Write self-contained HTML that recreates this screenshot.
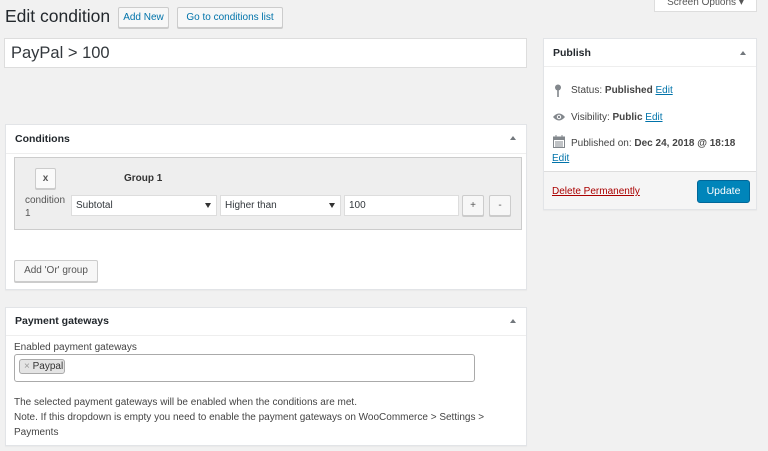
<!DOCTYPE html>
<html><head><meta charset="utf-8"><style>
*{box-sizing:border-box;margin:0;padding:0}
body{width:768px;height:451px;background:#f1f1f1;font-family:"Liberation Sans",sans-serif;font-size:10px;color:#444;position:relative;overflow:hidden}
.a{position:absolute}
.box{position:absolute;background:#fff;border:1px solid #e2e4e7;box-shadow:0 1px 1px rgba(0,0,0,.04)}
.btn{position:absolute;background:#f7f7f7;border:1px solid #ccc;border-radius:2px;box-shadow:0 1px 0 #ccc;color:#555;font-size:10px;text-align:center}
.hd{position:absolute;left:0;right:0;top:0;border-bottom:1px solid #eee;font-weight:bold;color:#23282d;font-size:10.5px;padding-left:9px}
.tri{position:absolute;right:10px;width:0;height:0;border-left:3px solid transparent;border-right:3px solid transparent;border-bottom:4px solid #72777c}
.sel{position:absolute;background:#fff;border:1px solid #ddd;height:21px;line-height:19px;padding-left:4px;color:#32373c;font-size:10px}
.sel i{position:absolute;right:5px;top:7px;border-left:3px solid transparent;border-right:3px solid transparent;border-top:5px solid #333}
a{color:#0073aa;text-decoration:underline}
</style></head><body>
<div class="a" style="left:654px;top:-2px;width:103px;height:14px;background:#fff;border:1px solid #ddd;border-top:none;font-size:10px;color:#555;text-align:center;line-height:10px">Screen Options ▾</div>
<div class="a" style="left:5px;top:6px;font-size:17.5px;color:#23282d">Edit condition</div>
<div class="btn" style="left:118px;top:7px;width:51px;height:21px;line-height:19px;color:#0073aa">Add New</div>
<div class="btn" style="left:177px;top:7px;width:106px;height:21px;line-height:19px;color:#0073aa">Go to conditions list</div>
<div class="a" style="left:4px;top:38px;width:523px;height:30px;background:#fff;border:1px solid #ddd;font-size:16.5px;color:#32373c;padding:5px 0 0 6px">PayPal &gt; 100</div>

<div class="box" style="left:5px;top:124px;width:522px;height:166px">
 <div class="hd" style="height:29px;line-height:28px">Conditions</div><div class="tri" style="top:11px"></div>
 <div class="a" style="left:8px;top:32px;width:508px;height:73px;background:#eee;border:1px solid #ccc"></div>
 <div class="btn" style="left:29px;top:43px;width:21px;height:21px;line-height:19px;background:#fafafa;font-weight:bold">x</div>
 <div class="a" style="left:118px;top:48px;font-weight:bold;color:#333">Group 1</div>
 <div class="a" style="left:19px;top:69px;line-height:13px;color:#555">condition<br>1</div>
 <div class="sel" style="left:65px;top:70px;width:146px">Subtotal<i></i></div>
 <div class="sel" style="left:214px;top:70px;width:121px">Higher than<i></i></div>
 <div class="sel" style="left:338px;top:70px;width:115px">100</div>
 <div class="btn" style="left:456px;top:70px;width:22px;height:21px;line-height:19px">+</div>
 <div class="btn" style="left:483px;top:70px;width:22px;height:21px;line-height:19px">-</div>
 <div class="btn" style="left:8px;top:135px;width:84px;height:22px;line-height:20px">Add 'Or' group</div>
</div>

<div class="box" style="left:5px;top:307px;width:522px;height:139px">
 <div class="hd" style="height:28px;line-height:27px">Payment gateways</div><div class="tri" style="top:11px"></div>
 <div class="a" style="left:8px;top:34px;color:#444">Enabled payment gateways</div>
 <div class="a" style="left:8px;top:46px;width:461px;height:28px;background:#fff;border:1px solid #aaa;border-radius:3px"></div>
 <div class="a" style="left:13px;top:51px;width:46px;height:15px;background:#e4e4e4;border:1px solid #aaa;border-radius:3px;line-height:13px;padding-left:4px;color:#333"><span style="color:#999">×</span> Paypal</div>
 <div class="a" style="left:8px;top:87px;line-height:15px;color:#444;width:500px">The selected payment gateways will be enabled when the conditions are met.<br>Note. If this dropdown is empty you need to enable the payment gateways on WooCommerce &gt; Settings &gt;<br>Payments</div>
</div>

<div class="box" style="left:543px;top:38px;width:214px;height:172px">
 <div class="hd" style="height:28px;line-height:28px">Publish</div><div class="tri" style="top:12px"></div>
 <svg class="a" style="left:10px;top:45px" width="8" height="14" viewBox="0 0 8 14"><circle cx="4" cy="3.5" r="3" fill="#82878c"/><rect x="3.2" y="5" width="1.6" height="8" fill="#82878c"/></svg>
 <div class="a" style="left:27px;top:46px">Status: <b>Published</b> <a>Edit</a></div>
 <svg class="a" style="left:8px;top:73px" width="14" height="10" viewBox="0 0 14 10"><path d="M1 5Q7-2 13 5Q7 12 1 5Z" fill="#82878c"/><circle cx="7" cy="5" r="2.2" fill="#fff"/><circle cx="7" cy="5" r="1.2" fill="#82878c"/></svg>
 <div class="a" style="left:27px;top:73px">Visibility: <b>Public</b> <a>Edit</a></div>
 <svg class="a" style="left:9px;top:96px" width="12" height="13" viewBox="0 0 12 13"><rect x="0.5" y="2" width="11" height="10.5" fill="none" stroke="#82878c"/><rect x="0.5" y="2" width="11" height="3" fill="#82878c"/><path d="M3 0v3M9 0v3M3 6v6M5 6v6M7 6v6M9 6v6" stroke="#82878c"/></svg>
 <div class="a" style="left:27px;top:99px">Published on: <b>Dec 24, 2018 @ 18:18</b></div>
 <div class="a" style="left:8px;top:114px"><a>Edit</a></div>
 <div class="a" style="left:0;right:0;top:132px;bottom:0;background:#f5f5f5;border-top:1px solid #ddd"></div>
 <div class="a" style="left:8px;top:147px"><a style="color:#a00">Delete Permanently</a></div>
 <div class="a" style="left:153px;top:141px;width:53px;height:23px;background:#0085ba;border:1px solid #006799;border-radius:3px;color:#fff;text-align:center;line-height:21px;font-size:10.5px">Update</div>
</div>
</body></html>
